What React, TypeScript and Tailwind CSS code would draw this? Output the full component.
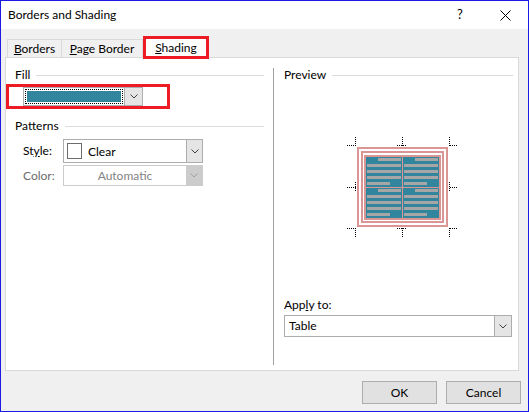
import React from "react";

function Chevron({ color = "#404040" }: { color?: string }) {
  return (
    <svg width="8" height="5" viewBox="0 0 8 5">
      <polyline points="0.5,0.5 4,4 7.5,0.5" fill="none" stroke={color} strokeWidth="1" />
    </svg>
  );
}

function GroupLabel({ text, mr }: { text: string; mr: string }) {
  return (
    <div className={`flex h-[16px] items-center ${mr}`}>
      <span className="leading-none">{text}</span>
      <div className="ml-[6px] h-px flex-1 bg-[#dcdcdc]" />
    </div>
  );
}

const BARS_TOP = [28, 34, 40, 46, 52];
const BARS_BOTTOM = [59, 65, 71, 77, 83];

function Cell({ x0, rows }: { x0: number; rows: number[] }) {
  return (
    <g fill="#a6a6a6">
      {rows.map((y, i) => {
        if (i === 0) return <rect key={i} x={x0 + 11} y={y} width={23} height={3} />;
        if (i === rows.length - 1) return <rect key={i} x={x0} y={y} width={23} height={3} />;
        return <rect key={i} x={x0} y={y} width={34} height={3} />;
      })}
    </g>
  );
}

function PreviewGraphic() {
  const marks: [number, number, number, number][] = [
    [15.5, 7, 15.5, 16], [7, 15.5, 16, 15.5],
    [62.5, 7, 62.5, 16], [57, 15.5, 67, 15.5],
    [109.5, 7, 109.5, 16], [110, 15.5, 118, 15.5],
    [7, 57.5, 16, 57.5], [15.5, 52, 15.5, 61],
    [110, 57.5, 118, 57.5], [109.5, 52, 109.5, 61],
    [7, 98.5, 16, 98.5], [15.5, 98, 15.5, 107],
    [57, 98.5, 67, 98.5], [62.5, 98, 62.5, 107],
    [110, 98.5, 118, 98.5], [109.5, 98, 109.5, 107],
  ];
  return (
    <svg width="130" height="110" viewBox="0 0 130 110">
      {marks.map(([x1, y1, x2, y2], i) => (
        <line key={i} x1={x1} y1={y1} x2={x2} y2={y2} stroke="#000" strokeWidth="1" strokeDasharray="1 1" />
      ))}
      <rect x="18" y="18" width="89" height="78" fill="none" stroke="#d99694" strokeWidth="2" />
      <rect x="22" y="22" width="81" height="70" fill="none" stroke="#d99694" strokeWidth="2" />
      <rect x="25" y="26" width="75" height="63" fill="#31859c" stroke="#d99694" strokeWidth="2" />
      <line x1="62.5" y1="27" x2="62.5" y2="88" stroke="#d99694" strokeWidth="1" />
      <line x1="26" y1="57.5" x2="99" y2="57.5" stroke="#d99694" strokeWidth="1" />
      <Cell x0={27} rows={BARS_TOP} />
      <Cell x0={64} rows={BARS_TOP} />
      <Cell x0={27} rows={BARS_BOTTOM} />
      <Cell x0={64} rows={BARS_BOTTOM} />
    </svg>
  );
}

export default function App() {
  return (
    <div className="flex h-[412px] w-[529px] flex-col border border-[#1a1ae6] font-['Segoe_UI','Lato',sans-serif] text-[12px] text-black">
      {/* title bar */}
      <div className="flex h-[28px] items-center bg-white pl-[7px]">
        <span>Borders and Shading</span>
        <div className="flex-1" />
        <span className="mr-[16px] w-[12px] text-center text-[13px]">?</span>
        <span className="flex w-[46px] justify-center">
          <svg width="11" height="11" viewBox="0 0 11 11">
            <path d="M0.5 0.5 L10.5 10.5 M10.5 0.5 L0.5 10.5" stroke="#000" strokeWidth="1" />
          </svg>
        </span>
      </div>

      <div className="flex flex-1 flex-col bg-[#f0f0f0] pl-[4px]">
        {/* tabs */}
        <div className="relative z-10 mt-[7px] flex h-[21px] items-end pl-[2px]">
          <div className="flex h-[18px] w-[55px] items-center justify-center border-x border-t border-[#d9d9d9]">
            <span><u>B</u>orders</span>
          </div>
          <div className="flex h-[18px] w-[81px] items-center justify-center border-r border-t border-[#d9d9d9]">
            <span><u>P</u>age Border</span>
          </div>
          <div className="-mb-[2px] flex h-[23px] w-[66px] items-center justify-center border-[3px] border-[#ed1c24] bg-white">
            <span><u>S</u>hading</span>
          </div>
        </div>

        {/* panel */}
        <div className="flex h-[314px] w-[514px] border border-[#d9d9d9] bg-white">
          <div className="flex w-[267px] flex-col">
            <div className="mt-[9px] pl-[9px]">
              <GroupLabel text="Fill" mr="mr-[9px]" />
            </div>
            <div className="mt-[1px] flex h-[25px] w-[164px] border-[3px] border-[#ed1c24] pl-[14px]">
              <div className="flex h-[19px] w-[120px] border border-[#adadad] bg-white">
                <div className="flex flex-1 p-[1px]">
                  <div className="flex-1 border border-dotted border-black p-[1px]">
                    <div className="h-full w-full bg-[#31859c]" />
                  </div>
                </div>
                <div className="flex w-[18px] items-center justify-center border-l border-[#adadad] bg-[#e5e5e5]">
                  <Chevron />
                </div>
              </div>
            </div>
            <div className="mt-[9px] pl-[9px]">
              <GroupLabel text="Patterns" mr="mr-[9px]" />
            </div>
            <div className="mt-[5px] flex h-[24px] items-center pl-[17px]">
              <span className="w-[40px]">
                St<u>y</u>le:
              </span>
              <div className="flex h-[24px] w-[140px] border border-[#adadad] bg-white">
                <div className="flex flex-1 items-center pl-[3px]">
                  <div className="h-[16px] w-[15px] border border-[#6d6d6d] bg-white" />
                  <span className="ml-[6px] mt-[2px]">Clear</span>
                </div>
                <div className="flex w-[16px] items-center justify-center border-l border-[#adadad] bg-[#e5e5e5]">
                  <Chevron />
                </div>
              </div>
            </div>
            <div className="mt-[2px] flex h-[21px] items-center pl-[17px] text-[#6d6d6d]">
              <span className="w-[40px]">Color:</span>
              <div className="flex h-[21px] w-[140px] border border-[#cccccc] bg-white">
                <div className="flex flex-1 items-center justify-center text-[#838383]">Automatic</div>
                <div className="flex w-[16px] items-center justify-center bg-[#cccccc]">
                  <Chevron color="#a0a0a0" />
                </div>
              </div>
            </div>
          </div>

          <div className="mt-[10px] h-[297px] w-px bg-[#a0a0a0]" />

          <div className="flex flex-1 flex-col">
            <div className="mt-[9px] pl-[10px]">
              <GroupLabel text="Preview" mr="mr-[5px]" />
            </div>
            <div className="ml-[66px] mt-[47px]">
              <PreviewGraphic />
            </div>
            <div className="mt-[57px] flex h-[16px] items-center pl-[10px]">
              <span>
                App<u>l</u>y to:
              </span>
            </div>
            <div className="ml-[10px] mt-[2px] flex h-[22px] w-[228px] border border-[#adadad] bg-white">
              <div className="flex flex-1 items-center pl-[4px]">Table</div>
              <div className="flex w-[17px] items-center justify-center border-l border-[#adadad] bg-[#e5e5e5]">
                <Chevron />
              </div>
            </div>
          </div>
        </div>

        {/* buttons */}
        <div className="mt-[10px] flex justify-end gap-[9px] pr-[7px]">
          <button type="button" className="h-[23px] w-[75px] border border-[#adadad] bg-[#e1e1e1]">
            OK
          </button>
          <button type="button" className="h-[23px] w-[75px] border border-[#adadad] bg-[#e1e1e1]">
            Cancel
          </button>
        </div>
      </div>
    </div>
  );
}
